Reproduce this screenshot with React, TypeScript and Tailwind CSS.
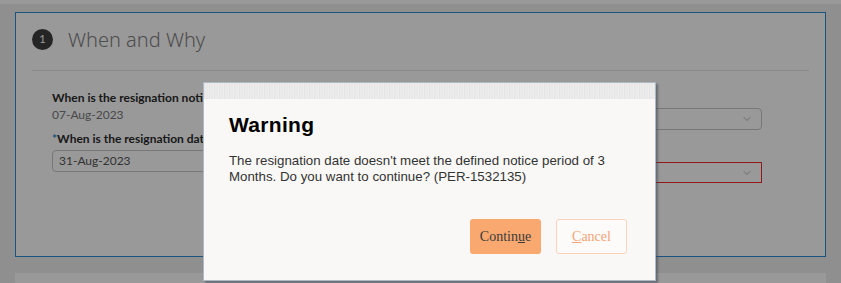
import React from 'react';
import { ChevronDown } from 'lucide-react';

const sans = 'font-["Lato","Noto_Sans",sans-serif]';

export default function App() {
  return (
    <div className="relative w-[841px] h-[283px] overflow-hidden bg-[#eeeeee]">
      {/* page underneath */}
      <div className="h-1 bg-white" />
      <div className="px-[15px] pt-2">
        <div className={`h-[245px] border border-[#2a8ad4] bg-white px-4 ${sans}`}>
          <div className="flex items-center gap-[15px] h-[57px] pb-1">
            <div className="w-[21px] h-[21px] rounded-full bg-[#3f3f3f] text-white text-[11px] flex items-center justify-center">1</div>
            <h2 className="text-[20px] font-light text-[#828282] font-['Noto_Sans',sans-serif]">When and Why</h2>
          </div>
          <div className="border-t border-[#e3e3e3]" />
          <div className="grid grid-cols-[390px_1fr] pl-5 pr-[47px] pt-[19px]">
            <div className="text-[12px] leading-4">
              <div className="font-bold text-[#2b2b2b]">When is the resignation notification date?</div>
              <div className="text-[#7a7a7a] mt-px">07-Aug-2023</div>
              <div className="font-bold text-[#2b2b2b] mt-[8px]">
                <span className="text-[#2a8ad4]">*</span>When is the resignation date?
              </div>
              <div className="mt-[3px] w-[300px] h-[22px] border border-[#c8c8c8] rounded-sm px-1.5 flex items-center text-[#555]">31-Aug-2023</div>
            </div>
            <div className="pl-[30px]">
              <div className="h-4" />
              <div className="mt-[2px] h-[22px] border border-[#c8c8c8] rounded-sm flex items-center justify-end pr-2">
                <ChevronDown size={12} className="text-[#b5b5b5]" />
              </div>
              <div className="h-4 mt-[14px]" />
              <div className="mt-[2px] h-[21px] border border-[#f02a2a] flex items-center justify-end pr-2">
                <ChevronDown size={12} className="text-[#b5b5b5]" />
              </div>
            </div>
          </div>
        </div>
        <div className="mt-4 h-10 bg-white" />
      </div>

      {/* dim overlay */}
      <div className="absolute inset-0 bg-black/40" />

      {/* dialog */}
      <div className="absolute left-[203px] top-[82px] w-[453px] h-[199px] border border-[#aeb9c4] bg-[#f9f8f6] shadow-[2px_2px_2px_rgba(60,70,80,0.55)] flex flex-col">
        <div className="h-4 bg-[#e9e9e9] bg-[repeating-linear-gradient(90deg,#e2e2e2_0px,#eeeeee_2px,#e6e6e6_3px,#f0f0f0_5px)]" />
        <div className="flex-1 flex flex-col pl-[25px] pr-7 font-['Liberation_Sans',Arial,sans-serif]">
          <h1 className="mt-[14px] text-[21px] leading-6 font-bold text-black tracking-[0.3px]">Warning</h1>
          <p className="mt-4 text-[13.3px] leading-4 text-[#333]">
            The resignation date doesn't meet the defined notice period of 3 Months. Do you want to continue? (PER-1532135)
          </p>
          <div className="mt-auto mb-[26px] flex justify-end gap-[15px] font-['Liberation_Serif','Times_New_Roman',serif] text-[14px]">
            <button className="w-[71px] h-[35px] rounded-[3px] bg-[#f9a86f] text-[#3b3b3b]">
              Contin<span className="underline">u</span>e
            </button>
            <button className="w-[71px] h-[35px] rounded-[3px] border border-[#f9d3bc] bg-[#fdfbfa] text-[#f4a476]">
              <span className="underline">C</span>ancel
            </button>
          </div>
        </div>
      </div>
    </div>
  );
}
